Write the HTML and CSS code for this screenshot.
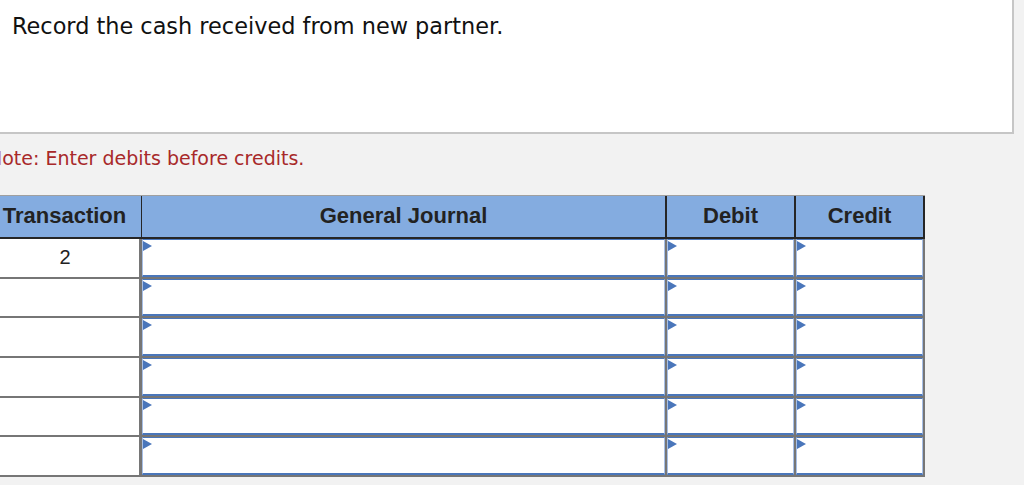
FILE: index.html
```html
<!DOCTYPE html>
<html>
<head>
<meta charset="utf-8">
<link rel="stylesheet" href="styles.css">
</head>
<body>
<div class="page">
  <div class="prompt">
    <p class="prompt-text">Record the cash received from new partner.</p>
  </div>
  <p class="note">Note: Enter debits before credits.</p>
  <div class="journal">
    <div class="hcell c1">Transaction</div>
    <div class="hcell">General Journal</div>
    <div class="hcell">Debit</div>
    <div class="hcell">Credit</div>

    <div class="tcell">2</div>
    <div class="icell"><div class="box"><span class="flag"></span></div></div>
    <div class="icell"><div class="box"><span class="flag"></span></div></div>
    <div class="icell"><div class="box"><span class="flag"></span></div></div>

    <div class="tcell"></div>
    <div class="icell"><div class="box"><span class="flag"></span></div></div>
    <div class="icell"><div class="box"><span class="flag"></span></div></div>
    <div class="icell"><div class="box"><span class="flag"></span></div></div>

    <div class="tcell"></div>
    <div class="icell"><div class="box"><span class="flag"></span></div></div>
    <div class="icell"><div class="box"><span class="flag"></span></div></div>
    <div class="icell"><div class="box"><span class="flag"></span></div></div>

    <div class="tcell"></div>
    <div class="icell"><div class="box"><span class="flag"></span></div></div>
    <div class="icell"><div class="box"><span class="flag"></span></div></div>
    <div class="icell"><div class="box"><span class="flag"></span></div></div>

    <div class="tcell"></div>
    <div class="icell"><div class="box"><span class="flag"></span></div></div>
    <div class="icell"><div class="box"><span class="flag"></span></div></div>
    <div class="icell"><div class="box"><span class="flag"></span></div></div>

    <div class="tcell"></div>
    <div class="icell"><div class="box"><span class="flag"></span></div></div>
    <div class="icell"><div class="box"><span class="flag"></span></div></div>
    <div class="icell"><div class="box"><span class="flag"></span></div></div>
  </div>
</div>
</body>
</html>
```

FILE: styles.css
```css
html, body {
  margin: 0;
  padding: 0;
  background: #f2f2f2;
  overflow: hidden;
}

.page {
  margin-left: -12px;
  width: 1036px;
}

.prompt {
  box-sizing: border-box;
  width: 1026px;
  height: 134px;
  background: #ffffff;
  border-right: 2px solid #c6c6c6;
  border-bottom: 2px solid #c6c6c6;
  padding: 13px 24px 0 24px;
}

.prompt-text {
  margin: 0;
  font-family: "DejaVu Sans", Verdana, sans-serif;
  font-size: 22.4px;
  line-height: 26px;
  color: #111111;
}

.note {
  margin: 13px 0 0 0;
  height: 22px;
  font-family: "DejaVu Sans", Verdana, sans-serif;
  font-size: 19px;
  line-height: 22px;
  color: #a8292a;
}

.journal {
  margin-top: 26px;
  display: grid;
  grid-template-columns: 154px 525px 129px 129px;
  grid-template-rows: 43px repeat(6, 39.7px);
  border-top: 1px solid #a0a0a0;
  width: 937px;
}

.hcell {
  box-sizing: border-box;
  background: #84ace0;
  border-right: 2px solid #262626;
  border-bottom: 2px solid #262626;
  font-family: "Liberation Sans", Arial, sans-serif;
  font-weight: bold;
  font-size: 22px;
  color: #222222;
  display: flex;
  align-items: center;
  justify-content: center;
  padding-bottom: 2px;
}

.hcell.c1 {
  border-right-width: 1px;
}

.tcell {
  box-sizing: border-box;
  background: #ffffff;
  border-right: 3px solid #767676;
  border-bottom: 2px solid #767676;
  font-family: "Liberation Sans", Arial, sans-serif;
  font-size: 20px;
  color: #222222;
  display: flex;
  align-items: center;
  justify-content: center;
  padding-left: 3px;
}

.icell {
  box-sizing: border-box;
  background: #767676;
  padding: 0 2px 2px 0;
}

.box {
  position: relative;
  box-sizing: border-box;
  height: 100%;
  background: #ffffff;
  border-left: 1px solid #a7bfe6;
  border-right: 1px solid #a7bfe6;
  border-top: 1px solid #4a76ba;
  border-bottom: 2px solid #4a76ba;
}

.flag {
  position: absolute;
  left: 0;
  top: 1px;
  width: 0;
  height: 0;
  border-top: 5px solid transparent;
  border-bottom: 5px solid transparent;
  border-left: 9px solid #4a76ba;
}
```
